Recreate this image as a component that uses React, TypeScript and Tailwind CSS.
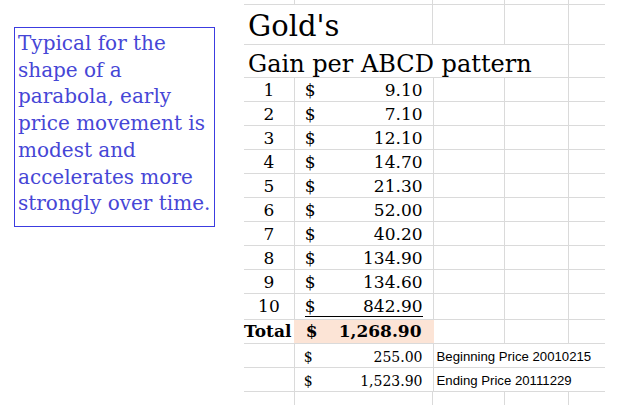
import * as React from 'react';

const gains: [string, string][] = [
  ['1', '9.10'],
  ['2', '7.10'],
  ['3', '12.10'],
  ['4', '14.70'],
  ['5', '21.30'],
  ['6', '52.00'],
  ['7', '40.20'],
  ['8', '134.90'],
  ['9', '134.60'],
];

const noteLines = [
  'Typical for the',
  'shape of a',
  'parabola, early',
  'price movement is',
  'modest and',
  'accelerates more',
  'strongly over time.',
];

const EmptyTail = () => (
  <>
    <div className="w-[72px] border-r border-[#dadada]" />
    <div className="w-[64px] border-r border-[#dadada]" />
    <div className="w-[36px]" />
  </>
);

const App = () => {
  return (
    <div className="w-[619px] h-[405px] overflow-hidden bg-white flex font-['DejaVu_Serif',serif] text-black">
      {/* floating text box */}
      <div className="w-[244px] shrink-0 pl-[14px] pt-[27px]">
        <div className="w-[201px] h-[200px] border border-[#3c3ce0] pl-[3px] pt-[2px] text-[20px] leading-[26.7px] text-[#4646d6] whitespace-nowrap">
          {noteLines.map((l) => (
            <div key={l}>{l}</div>
          ))}
        </div>
      </div>

      {/* sheet */}
      <div className="w-[361px] shrink-0 flex flex-col">
        <div className="flex h-[5px] shrink-0 border-b border-[#dadada]">
          <div className="w-[51px] border-r border-[#dadada]" />
          <div className="w-[139px] border-r border-[#dadada]" />
          <EmptyTail />
        </div>

        <div className="flex h-[40px] shrink-0 border-b border-[#dadada]">
          <div className="w-[190px] border-r border-[#dadada] flex items-end pl-[4px] pb-[3px] text-[29px] leading-[29px] whitespace-nowrap">
            Gold's
          </div>
          <EmptyTail />
        </div>

        <div className="flex h-[33px] shrink-0 border-b border-[#dadada]">
          <div className="w-[326px] border-r border-[#dadada] flex items-end pl-[4px] pb-[1px] text-[24px] leading-[24px] whitespace-nowrap">
            Gain per ABCD pattern
          </div>
          <div className="w-[36px]" />
        </div>

        {gains.map(([n, v]) => (
          <div key={n} className="flex h-[24px] shrink-0 border-b border-[#dadada] text-[17px] leading-[20px]">
            <div className="w-[51px] border-r border-[#dadada] flex items-end justify-center pb-[1px]">{n}</div>
            <div className="w-[139px] border-r border-[#dadada] flex items-end justify-between px-[10px] pb-[1px]">
              <span>$</span>
              <span>{v}</span>
            </div>
            <EmptyTail />
          </div>
        ))}

        <div className="flex h-[26px] shrink-0 border-b border-[#dadada] text-[17px] leading-[20px]">
          <div className="w-[51px] border-r border-[#dadada] flex items-end justify-center pb-[3px]">10</div>
          <div className="w-[139px] border-r border-[#dadada] flex items-end px-[10px] pb-[2px]">
            <div className="flex-1 flex justify-between border-b border-black">
              <span>$</span>
              <span>842.90</span>
            </div>
          </div>
          <EmptyTail />
        </div>

        <div className="flex h-[24px] shrink-0 border-b border-[#dadada] text-[17px] leading-[20px] font-bold">
          <div className="w-[50px] flex items-end pb-[2px] whitespace-nowrap">Total</div>
          <div className="w-[140px] bg-[#fce4d6] flex items-end justify-between pl-[12px] pr-[12px] pb-[2px]">
            <span>$</span>
            <span>1,268.90</span>
          </div>
          <EmptyTail />
        </div>

        {[
          ['255.00', 'Beginning Price 20010215'],
          ['1,523.90', 'Ending Price 20111229'],
        ].map(([v, label]) => (
          <div key={v} className="flex h-[24px] shrink-0 border-b border-[#dadada] text-[14px] leading-[20px]">
            <div className="w-[51px] border-r border-[#dadada]" />
            <div className="w-[139px] border-r border-[#dadada] flex items-end justify-between pl-[9px] pr-[10px]">
              <span>$</span>
              <span>{v}</span>
            </div>
            <div className="w-[172px] flex items-end pl-[3px] font-['Liberation_Sans',sans-serif] text-[13.2px] whitespace-nowrap">
              {label}
            </div>
          </div>
        ))}

        <div className="flex h-[24px] shrink-0 border-b border-[#dadada]">
          <div className="w-[51px] border-r border-[#dadada]" />
          <div className="w-[139px] border-r border-[#dadada]" />
          <EmptyTail />
        </div>
      </div>
    </div>
  );
};

export default App;
